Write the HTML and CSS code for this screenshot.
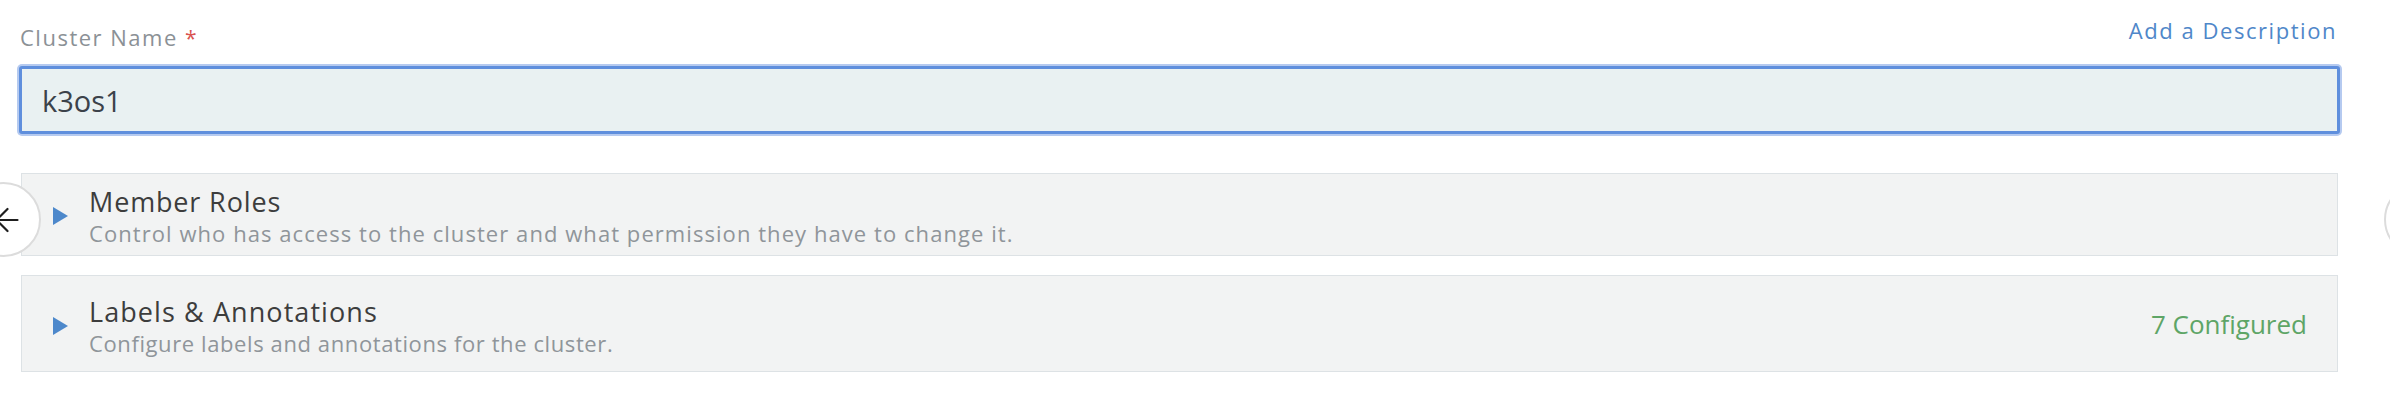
FILE: index.html
```html
<!DOCTYPE html>
<html lang="en">
<head>
<meta charset="utf-8">
<title>Cluster</title>
<link rel="stylesheet" href="styles.css">
</head>
<body>
<div class="page">
  <div class="field">
    <div class="field-head">
      <label class="field-label" for="cluster-name">Cluster Name <span class="req">*</span></label>
      <a class="link" href="#">Add a Description</a>
    </div>
    <input class="text-input" id="cluster-name" type="text" value="k3os1">
  </div>

  <div class="accordion">
    <div class="acc-item">
      <span class="acc-caret"></span>
      <div class="acc-text">
        <div class="acc-title">Member Roles</div>
        <div class="acc-desc">Control who has access to the cluster and what permission they have to change it.</div>
      </div>
    </div>
    <div class="acc-item acc-item-tall">
      <span class="acc-caret"></span>
      <div class="acc-text">
        <div class="acc-title acc-title-wide">Labels &amp; Annotations</div>
        <div class="acc-desc acc-desc-tight">Configure labels and annotations for the cluster.</div>
      </div>
      <div class="acc-status">7 Configured</div>
    </div>
  </div>

  <button class="nav nav-prev" type="button" aria-label="Previous">
    <svg class="nav-icon" width="40" height="40" viewBox="-20 -20 40 40"><path d="M-7.5 0 H13.5 M3.5 -11 L-7.5 0 L3.5 11" fill="none" stroke="#1e1e1e" stroke-width="2.2" stroke-linecap="round" stroke-linejoin="round"/></svg>
  </button>
  <button class="nav nav-next" type="button" aria-label="Next"></button>
</div>
</body>
</html>
```

FILE: styles.css
```css
* { box-sizing: border-box; }

html, body {
  margin: 0;
  padding: 0;
  background: #ffffff;
  overflow: hidden;
}

.page {
  position: relative;
  width: 2390px;
  height: 416px;
  padding: 15px 51px 0 20px;
  font-family: "Open Sans", "Liberation Sans", sans-serif;
}

.field-head {
  display: flex;
  justify-content: space-between;
  align-items: flex-start;
}

.field-label {
  margin-top: 7px;
  font-size: 22px;
  line-height: 30px;
  letter-spacing: 1.5px;
  color: #8b9196;
}

.req {
  color: #d9534f;
  font-size: 21px;
}

.link {
  font-size: 22px;
  line-height: 30px;
  letter-spacing: 1.55px;
  color: #4f87c9;
  text-decoration: none;
  margin-right: 2px;
}

.text-input {
  display: block;
  width: calc(100% + 2px);
  height: 68px;
  margin: 13px 0 0 -1px;
  padding: 0 20px;
  border: 3px solid #5f8fdd;
  border-radius: 3px;
  box-shadow: 0 0 0 2px #b5caf0;
  background: #e9f1f2;
  font-family: "Open Sans", "Liberation Sans", sans-serif;
  font-size: 29px;
  color: #3b424a;
  outline: none;
}

.accordion {
  display: flex;
  flex-direction: column;
  gap: 19px;
  margin-top: 39px;
  padding: 0 1px;
}

.acc-item {
  display: flex;
  align-items: center;
  padding: 13px 30px 10px 31px;
  background: #f2f3f3;
  border: 1px solid #dde2e5;
}

.acc-item-tall {
  padding-top: 21px;
  padding-bottom: 16px;
}

.acc-caret {
  width: 0;
  height: 0;
  border-left: 15px solid #4d88cb;
  border-top: 9px solid transparent;
  border-bottom: 9px solid transparent;
  margin-right: 21px;
  flex: none;
}

.acc-text {
  flex: 1;
  display: flex;
  flex-direction: column;
  gap: 4px;
}

.acc-title {
  font-size: 27px;
  line-height: 30px;
  letter-spacing: 0.85px;
  color: #3d3d3d;
}

.acc-title-wide {
  letter-spacing: 1.08px;
}

.acc-desc {
  font-size: 22px;
  line-height: 24px;
  letter-spacing: 1.06px;
  color: #8f959a;
}

.acc-desc-tight {
  letter-spacing: 0.6px;
}

.acc-status {
  margin-bottom: 4px;
  font-size: 26px;
  line-height: 30px;
  color: #5ea566;
}

.nav {
  position: absolute;
  top: 182px;
  width: 75px;
  height: 75px;
  padding: 0;
  border-radius: 50%;
  border: 2px solid #dcdcdc;
  background: #ffffff;
  display: flex;
  align-items: center;
  justify-content: center;
}

.nav-prev {
  left: -34px;
}

.nav-next {
  left: 2384px;
}

.nav-icon {
  display: block;
  flex: none;
}
```
